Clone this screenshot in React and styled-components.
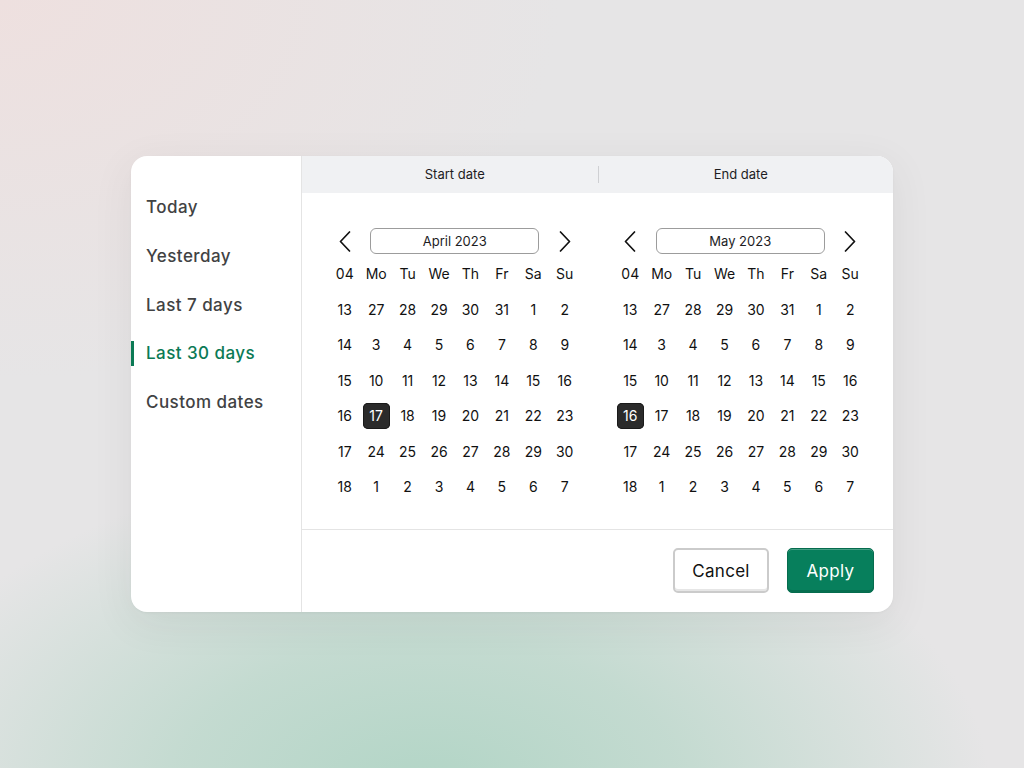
import React from "react";
import styled, { createGlobalStyle } from "styled-components";

const Global = createGlobalStyle`
  html, body { margin: 0; padding: 0; }
  body { font-family: Inter, "Noto Sans", sans-serif; -webkit-font-smoothing: antialiased; }
  * { box-sizing: border-box; }
`;

const Page = styled.div`
  width: 100vw;
  height: 100vh;
  display: flex;
  align-items: center;
  justify-content: center;
  background:
    radial-gradient(ellipse 560px 330px at 430px 790px, rgba(178, 213, 198, 1), rgba(184, 215, 201, 0.75) 45%, rgba(230, 229, 230, 0) 100%),
    radial-gradient(ellipse 560px 380px at 0px 0px, rgba(238, 224, 223, 1), rgba(236, 226, 225, 0) 100%),
    #e6e5e6;
  overflow: hidden;
`;

const Card = styled.div`
  width: 762px;
  height: 456px;
  background: #fff;
  border-radius: 16px;
  display: grid;
  grid-template-columns: 171px 1fr;
  overflow: hidden;
  box-shadow: 0 10px 40px rgba(60, 70, 70, 0.08), 0 1px 3px rgba(0, 0, 0, 0.04);
`;

const Sidebar = styled.nav`
  border-right: 1px solid #e4e4e4;
  padding-top: 27px;
  display: flex;
  flex-direction: column;
`;

const NavItem = styled.div`
  position: relative;
  height: 48.7px;
  display: flex;
  align-items: center;
  padding-left: 15px;
  font-size: 17px;
  font-weight: 500;
  letter-spacing: 0.45px;
  color: ${(p) => (p.$active ? "#0b7a55" : "#414243")};
  &::before {
    content: "";
    display: ${(p) => (p.$active ? "block" : "none")};
    position: absolute;
    left: 0;
    top: 12px;
    width: 3px;
    height: 25px;
    background: #0b7a55;
  }
`;

const Main = styled.div`
  display: flex;
  flex-direction: column;
`;

const Header = styled.div`
  height: 37px;
  background: #f0f1f3;
  display: grid;
  grid-template-columns: 1fr 1fr;
  padding: 0 10px;
`;

const HeaderCell = styled.div`
  display: flex;
  align-items: center;
  justify-content: center;
  font-size: 13px;
  color: #1d1d1f;
  padding-bottom: 1px;
  border-left: ${(p) => (p.$divider ? "1px solid #cfd0d3" : "none")};
  margin: ${(p) => (p.$divider ? "10px 0" : "0")};
`;

const Calendars = styled.div`
  display: grid;
  grid-template-columns: 1fr 1fr;
  padding: 35px 10px 24px;
  border-bottom: 1px solid #e4e4e4;
`;

const Calendar = styled.div`
  display: flex;
  flex-direction: column;
  align-items: center;
`;

const MonthNav = styled.div`
  width: 251.4px;
  height: 26px;
  margin-bottom: 2px;
  display: grid;
  grid-template-columns: 31.43px 1fr 31.43px;
  align-items: center;
`;

const Chevron = styled.button`
  border: none;
  background: none;
  padding: 0;
  display: flex;
  align-items: center;
  justify-content: center;
  color: #111;
`;

const MonthBox = styled.div`
  margin: 0 10px;
  height: 26px;
  border: 1px solid #9c9c9c;
  border-radius: 6px;
  display: flex;
  align-items: center;
  justify-content: center;
  font-size: 13px;
  color: #1d1d1f;
`;

const Grid = styled.div`
  width: 251.4px;
  display: grid;
  grid-template-columns: repeat(8, 1fr);
  grid-auto-rows: 35.5px;
`;

const Cell = styled.div`
  display: flex;
  align-items: center;
  justify-content: center;
  font-size: 14px;
  color: #111;
`;

const Selected = styled.span`
  width: 27px;
  height: 26px;
  border-radius: 5px;
  background: #2b2b2b;
  color: #fff;
  display: flex;
  align-items: center;
  justify-content: center;
  box-shadow: inset 0 0 0 1px #1a1a1a;
`;

const Footer = styled.div`
  flex: 1;
  display: flex;
  align-items: center;
  justify-content: flex-end;
  gap: 18px;
  padding: 0 19px;
`;

const Button = styled.button`
  height: 45px;
  width: ${(p) => (p.$primary ? "87px" : "96px")};
  padding: 0;
  border-radius: 5px;
  font-family: Inter, sans-serif;
  font-size: 17px;
  letter-spacing: 0.3px;
  cursor: pointer;
  background: ${(p) => (p.$primary ? "#077f5c" : "#fff")};
  color: ${(p) => (p.$primary ? "#fff" : "#111")};
  border: ${(p) => (p.$primary ? "1px solid #066c4e" : "2px solid #cbcbcb")};
  box-shadow: ${(p) =>
    p.$primary
      ? "inset 0 1px 0 rgba(255,255,255,0.25), inset 0 -2px 0 rgba(0,0,0,0.12)"
      : "inset 0 -2px 0 #e6e6e6"};
`;

const ChevronIcon = ({ dir }) => (
  <svg width="12" height="21" viewBox="0 0 12 21" fill="none">
    <polyline
      points={dir === "left" ? "10.5,1 1.5,10.5 10.5,20" : "1.5,1 10.5,10.5 1.5,20"}
      stroke="currentColor"
      strokeWidth="1.7"
      strokeLinecap="round"
      strokeLinejoin="round"
    />
  </svg>
);

const weekdays = ["04", "Mo", "Tu", "We", "Th", "Fr", "Sa", "Su"];
const rows = [
  [13, 27, 28, 29, 30, 31, 1, 2],
  [14, 3, 4, 5, 6, 7, 8, 9],
  [15, 10, 11, 12, 13, 14, 15, 16],
  [16, 17, 18, 19, 20, 21, 22, 23],
  [17, 24, 25, 26, 27, 28, 29, 30],
  [18, 1, 2, 3, 4, 5, 6, 7],
];

const MonthCalendar = ({ label, selRow, selCol }) => (
  <Calendar>
    <MonthNav>
      <Chevron aria-label="Previous month"><ChevronIcon dir="left" /></Chevron>
      <MonthBox>{label}</MonthBox>
      <Chevron aria-label="Next month"><ChevronIcon dir="right" /></Chevron>
    </MonthNav>
    <Grid>
      {weekdays.map((w) => (
        <Cell key={w}>{w}</Cell>
      ))}
      {rows.map((r, ri) =>
        r.map((d, ci) => (
          <Cell key={`${ri}-${ci}`}>
            {ri === selRow && ci === selCol ? <Selected>{d}</Selected> : d}
          </Cell>
        ))
      )}
    </Grid>
  </Calendar>
);

const presets = ["Today", "Yesterday", "Last 7 days", "Last 30 days", "Custom dates"];

export default function App() {
  return (
    <>
      <Global />
      <Page>
        <Card>
          <Sidebar>
            {presets.map((p) => (
              <NavItem key={p} $active={p === "Last 30 days"}>
                {p}
              </NavItem>
            ))}
          </Sidebar>
          <Main>
            <Header>
              <HeaderCell>Start date</HeaderCell>
              <HeaderCell $divider>End date</HeaderCell>
            </Header>
            <Calendars>
              <MonthCalendar label="April 2023" selRow={3} selCol={1} />
              <MonthCalendar label="May 2023" selRow={3} selCol={0} />
            </Calendars>
            <Footer>
              <Button>Cancel</Button>
              <Button $primary>Apply</Button>
            </Footer>
          </Main>
        </Card>
      </Page>
    </>
  );
}
